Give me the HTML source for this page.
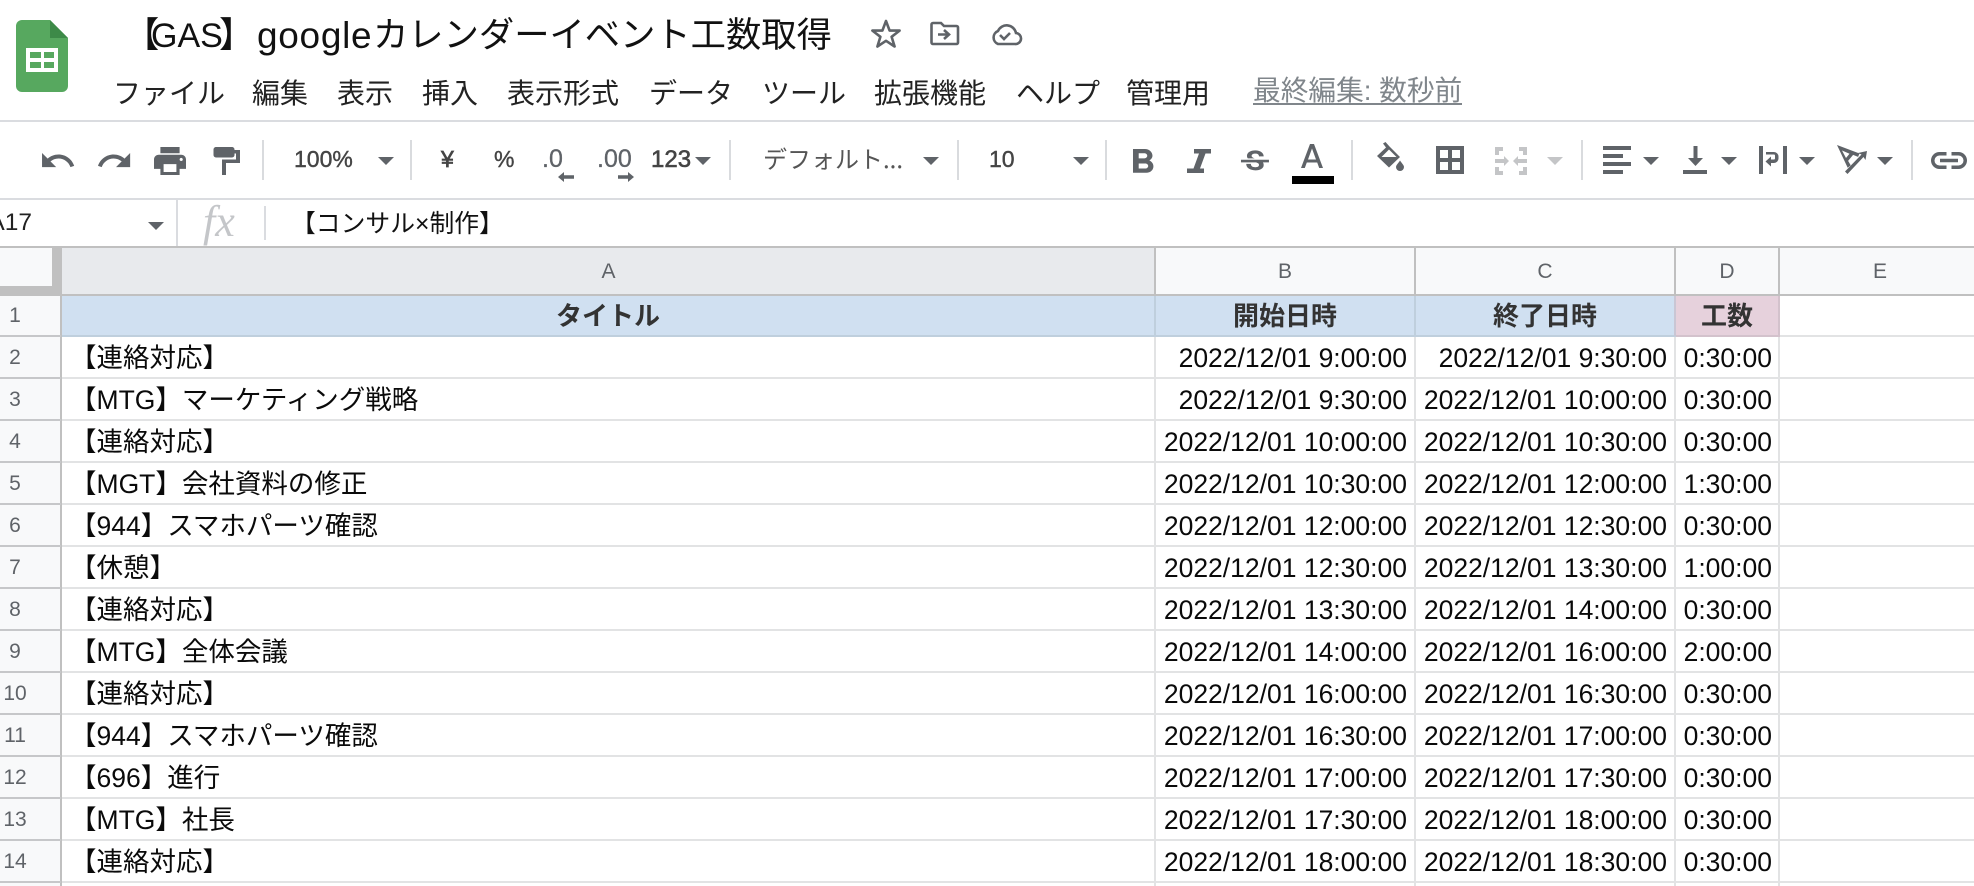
<!DOCTYPE html>
<html lang="ja"><head><meta charset="utf-8"><title>【GAS】googleカレンダーイベント工数取得</title>
<style>
html,body{margin:0;padding:0;background:#fff}
#p{position:relative;width:1974px;height:886px;overflow:hidden;background:#fff;font-family:"Liberation Sans","Noto Sans CJK JP",sans-serif;color:#000}
#p div,#p span.x{position:absolute;white-space:nowrap}
.m{top:71px;font-size:28px;line-height:42px;height:42px;color:#222;font-family:"Noto Sans CJK JP",sans-serif}
.tt{top:11px;font-size:35.3px;line-height:50px;color:#111;font-family:"Liberation Sans","Noto Sans CJK JP",sans-serif}
.tb{top:139px;font-size:23px;line-height:40px;height:40px;color:#444;-webkit-text-stroke:.4px #444}
.sep{top:140px;width:2px;height:40px;background:#d9dbde}
.h{top:248px;height:46px;line-height:47px;font-size:21px;color:#5f6368;text-align:center;background:#f8f9fa}
.hl{top:248px;width:2px;height:47px;background:#c0c0c0}
.t1{top:296px;height:39px;line-height:41px;font-size:26px;font-weight:bold;color:#333;text-align:center;background:#d0e0f1;font-family:"Liberation Sans","Noto Sans CJK JP",sans-serif}
.n{left:0;width:30px;text-align:center;font-size:21px;color:#5f6368;height:42px;line-height:42px}
.a,.b,.c,.d{height:42px;line-height:42.6px;font-size:26.5px;color:#0a0a0a}
.a{left:70px}
.b{right:567px}
.c{right:307px}
.d{right:202px}
.hr{left:62px;width:1912px;height:2px;background:#e2e3e4}
.hn{left:0;width:61px;height:2px;background:#c6c7c9}
.v{top:337px;width:2px;height:549px;background:#e2e3e4}
</style></head><body><div id="p">

<!-- Logo -->
<svg style="position:absolute;left:0;top:0" width="90" height="100" viewBox="0 0 90 100">
<path d="M22 20H50L68 38V86a6 6 0 0 1-6 6H22a6 6 0 0 1-6-6V26a6 6 0 0 1 6-6z" fill="#57a85f"/>
<path d="M50 20L68 38H50z" fill="#3d8a48"/>
<path d="M26 48H58V72H26zM30 52V58H41V52zM44 52V58H54V52zM30 62V68H41V62zM44 62V68H54V62z" fill="#fff" fill-rule="evenodd"/>
</svg>

<!-- Title -->
<div class="tt" style="left:124px">【</div>
<div class="tt" style="left:151px;font-size:34px">GAS</div>
<div class="tt" style="left:219px">】</div>
<div class="tt" style="left:257px;font-size:37px;letter-spacing:.7px">google</div>
<div class="tt" style="left:373px">カレンダーイベント工数取得</div>

<!-- Title icons -->
<svg style="position:absolute;left:860px;top:10px" width="180" height="50" viewBox="860 10 180 50" fill="none" stroke="#5f6368" stroke-width="2.6">
<path d="M886 21L889.6 30.6H899.6L891.6 36.8L894.6 46.5L886 40.8L877.4 46.5L880.4 36.8L872.4 30.6H882.4Z" stroke-linejoin="round"/>
<path d="M931.5 24.5a1.5 1.5 0 0 1 1.5-1.5h8l3 3h12.5a1.5 1.5 0 0 1 1.5 1.5v15a1.5 1.5 0 0 1-1.5 1.5h-23.5a1.5 1.5 0 0 1-1.5-1.5z"/>
<path d="M938 34.5h10M944 30l5 4.5-5 4.5"/>
<path d="M998 44h17a5.5 5.5 0 0 0 1-11 9.5 9.5 0 0 0-18-2 7 7 0 0 0 0 13z"/>
<path d="M1000 35l4 4 6-6"/>
</svg>

<!-- Menu -->
<div class="m" style="left:113px">ファイル</div>
<div class="m" style="left:252px">編集</div>
<div class="m" style="left:337px">表示</div>
<div class="m" style="left:422px">挿入</div>
<div class="m" style="left:507px">表示形式</div>
<div class="m" style="left:649px">データ</div>
<div class="m" style="left:762px">ツール</div>
<div class="m" style="left:874px">拡張機能</div>
<div class="m" style="left:1016px">ヘルプ</div>
<div class="m" style="left:1126px">管理用</div>
<div style="left:1253px;top:71px;font-size:27.7px;line-height:40px;color:#80868b;font-family:'Liberation Sans','Noto Sans CJK JP',sans-serif;border-bottom:2px solid #80868b;height:32px;overflow:visible">最終編集: 数秒前</div>

<!-- Toolbar frame -->
<div style="left:0;top:120px;width:1974px;height:2px;background:#dadce0"></div>
<div style="left:0;top:198px;width:1974px;height:2px;background:#dadce0"></div>

<div class="sep" style="left:262px"></div>
<div class="sep" style="left:410px"></div>
<div class="sep" style="left:729px"></div>
<div class="sep" style="left:957px"></div>
<div class="sep" style="left:1105px"></div>
<div class="sep" style="left:1351px"></div>
<div class="sep" style="left:1581px"></div>
<div class="sep" style="left:1911px"></div>

<div class="tb" style="left:294px">100%</div>
<div class="tb" style="left:441px;-webkit-text-stroke:.7px #444">¥</div>
<div class="tb" style="left:494px">%</div>
<div class="tb" style="left:542px;font-size:25px;color:#5f6368;-webkit-text-stroke:.3px #5f6368">.0</div>
<div class="tb" style="left:597px;font-size:25px;color:#5f6368;-webkit-text-stroke:.3px #5f6368">.00</div>
<div class="tb" style="left:651px;font-size:24px;-webkit-text-stroke:.6px #444;top:140px">123</div>
<div class="tb" style="left:763px;font-size:24px;color:#555;-webkit-text-stroke:0;font-family:'Noto Sans CJK JP',sans-serif;top:138px">デフォルト...</div>
<div class="tb" style="left:989px">10</div>

<svg style="position:absolute;left:0;top:130px" width="1974" height="60" viewBox="0 130 1974 60" fill="#5f6368">
<!-- undo / redo -->
<path transform="translate(38.9 142) scale(1.57)" d="M12.5 8c-2.65 0-5.05.99-6.9 2.6L2 7v9h9l-3.62-3.62c1.39-1.16 3.16-1.88 5.12-1.88 3.54 0 6.55 2.31 7.6 5.5l2.37-.78C21.08 11.03 17.15 8 12.5 8z"/>
<path transform="translate(95.6 142) scale(1.57)" d="M18.4 10.6C16.55 8.99 14.15 8 11.5 8c-4.65 0-8.58 3.03-9.96 7.22L3.9 16c1.05-3.19 4.05-5.5 7.6-5.5 1.95 0 3.73.72 5.12 1.88L13 16h9V7l-3.6 3.6z"/>
<!-- print -->
<path transform="translate(150.8 142.3) scale(1.6 1.56)" d="M19 8H5c-1.66 0-3 1.34-3 3v6h4v4h12v-4h4v-6c0-1.66-1.34-3-3-3zm-3 11H8v-5h8v5zm3-7c-.55 0-1-.45-1-1s.45-1 1-1 1 .45 1 1-.45 1-1 1zm-1-9H6v4h12V3z"/>
<!-- paint -->
<path d="M216 147H232a2.500 2.500 0 0 1 2.500 2.500V150H240V163H226V175H222V159.500H236V153.500H234.500V155a2.500 2.500 0 0 1-2.500 2.500H216a2.500 2.500 0 0 1-2.500-2.500V149.500A2.500 2.500 0 0 1 216 147Z"/>
<!-- dec arrows -->
<path d="M558 177l6-5v3.200h10v3.600h-10v3.200zM634 177l-6-5v3.200h-10v3.600h10v3.200z"/>
<!-- triangles -->
<path d="M378 157h16l-8 8zM695 157h16l-8 8zM923 157h16l-8 8zM1073 157h16l-8 8zM1643 157h16l-8 8zM1721 157h16l-8 8zM1799 157h16l-8 8zM1877 157h16l-8 8z"/>
<path d="M1547 157h16l-8 8z" fill="#c4c5c7"/>
<!-- B I S -->
<path transform="translate(1119.700 142.200) scale(1.9 1.7)" d="M15.6 10.790c.97-.67 1.65-1.77 1.65-2.79 0-2.26-1.75-4-4-4H7v14h7.040c2.090 0 3.710-1.7 3.710-3.790 0-1.520-.86-2.820-2.150-3.420zM10 6.500h3c.83 0 1.500.67 1.500 1.500s-.67 1.500-1.500 1.500h-3v-3zm3.500 9H10v-3h3.500c.83 0 1.500.67 1.500 1.500s-.67 1.500-1.500 1.500z"/>
<path d="M1194 149H1211V153.500H1205.500L1200 168.500H1204V173H1187V168.500H1193.500L1199 153.500H1194Z"/>
<path transform="translate(1236.300 146.400) scale(1.555 1.33)" d="M7.240 8.750c-.26-.48-.39-1.030-.39-1.670 0-.61.13-1.160.4-1.670.26-.5.63-.93 1.110-1.290.48-.35 1.050-.63 1.700-.83.66-.19 1.390-.29 2.180-.29.81 0 1.540.11 2.210.34.66.22 1.230.54 1.690.94.47.4.83.88 1.080 1.430.25.55.38 1.150.38 1.810h-3.010c0-.31-.05-.59-.15-.85-.09-.27-.24-.49-.44-.68-.2-.19-.45-.33-.75-.44-.3-.1-.66-.16-1.060-.16-.39 0-.74.04-1.030.13-.29.09-.53.21-.72.36-.19.16-.34.34-.44.55-.1.21-.15.43-.15.66 0 .48.25.88.74 1.210.38.25.77.48 1.410.7H7.390c-.05-.08-.11-.17-.15-.25zM21 12v-2H3v2h9.620c.18.07.4.14.55.2.37.17.66.34.87.51.21.17.35.36.43.57.07.2.11.43.11.69 0 .23-.05.45-.14.66-.09.2-.23.38-.42.53-.19.15-.42.26-.71.35-.29.08-.63.13-1.010.13-.43 0-.83-.04-1.180-.13s-.66-.23-.91-.42c-.25-.19-.45-.44-.59-.75-.14-.31-.25-.76-.25-1.210H6.400c0 .55.08 1.130.24 1.580.16.45.37.85.65 1.210.28.35.6.66.98.92.37.26.78.48 1.220.65.44.17.9.3 1.380.39.48.08.96.13 1.440.13.8 0 1.530-.09 2.180-.28s1.210-.45 1.670-.79c.46-.34.82-.77 1.070-1.270s.38-1.070.38-1.710c0-.6-.1-1.140-.31-1.610-.05-.11-.11-.23-.17-.33H21z"/>
<!-- Text colour A -->
<path d="M1310 144h4l9 24h-3.800l-2-5.500h-10.400l-2 5.500H1301zM1308 159.500h8L1312 148.500z" fill-rule="evenodd"/>
<path d="M1292 176h42v8h-42z" fill="#000"/>
<!-- fill -->
<path d="M1383 143.500l2.500-1.500 4 4.500 10.500 10.500-11 10.500-12-11.500 9-8.500zM1389 149.500l-7.500 7.500h15z" fill-rule="evenodd"/>
<path d="M1400 160.500c1.500 2.500 4 4.500 4 6.500a4 4 0 0 1-8 0c0-2 2.500-4 4-6.500z"/>
<!-- borders -->
<path d="M1436 146h28v28h-28zM1440 150v8h8v-8zM1452 150v8h8v-8zM1440 162v8h8v-8zM1452 162v8h8v-8z" fill-rule="evenodd"/>
<!-- merge -->
<g fill="#c4c5c7">
<path d="M1495 147h8v4h-8zM1519 147h8v4h-8zM1523 147h4v8h-4zM1495 171h8v4h-8zM1519 171h8v4h-8zM1523 167h4v8h-4zM1495 147h4v8h-4zM1495 167h4v8h-4z"/>
<path d="M1495 159h9v-3l5 5-5 5v-3h-9zM1527 159h-9v-3l-5 5 5 5v-3h9z"/>
</g>
<!-- align -->
<path d="M1603 146h28v4h-28zM1603 154h20v4h-20zM1603 162h28v4h-28zM1603 170h20v4h-20z"/>
<!-- valign -->
<path d="M1693.500 146h4v12h5.500l-7.500 8-7.500-8h5.500zM1683 170h24v4h-24z"/>
<!-- wrap -->
<path d="M1759 146h4v28h-4zM1783 146h4v28h-4zM1766 152h8a4.500 4.500 0 0 1 4.500 4.500v2a4.500 4.500 0 0 1-4.500 4.500h-3v3.500l-5.500-5 5.500-5v3h3a1 1 0 0 0 1-1v-3a1 1 0 0 0-1-1h-8z"/>
<!-- rotate -->
<path d="M1837 145l22.500 8.500-1.400 3.400-5-2-5 6 2.600 4.400-3 2.400zM1842 150.500l4 7.500 3.500-4.300z" fill-rule="evenodd"/>
<path d="M1845 171.500l16.500-17-3.500-1.500 9-2-1.500 9-2-3-16 17z"/>
<!-- link -->
<path d="M1931 160.500a8.500 8.500 0 0 1 8.500-8.500h7v3.500h-7a5 5 0 0 0 0 10h7v3.500h-7a8.500 8.500 0 0 1-8.500-8.500zM1940 158.700h18v3.600h-18zM1951.500 152h7a8.500 8.500 0 0 1 0 17h-7v-3.500h7a5 5 0 0 0 0-10h-7z"/>
</svg>

<!-- Formula bar -->
<svg style="position:absolute;left:140px;top:215px" width="30" height="20" viewBox="140 215 30 20" fill="#5f6368"><path d="M148 222h16l-8 8z"/></svg>
<div style="right:1942px;top:202px;font-size:24.5px;line-height:42px;color:#222">A17</div>
<div style="left:176px;top:200px;width:2px;height:46px;background:#dadce0"></div>
<div style="left:264px;top:206px;width:2px;height:34px;background:#dadce0"></div>
<div style="left:203px;top:199px;font-family:'Liberation Serif',serif;font-style:italic;font-size:44px;line-height:46px;color:#c4c6c9">fx</div>
<div style="left:291px;top:204px;font-size:24.8px;line-height:42px;color:#111">【コンサル×制作】</div>

<!-- Column header -->
<div style="left:0;top:246px;width:1974px;height:2px;background:#c0c0c0"></div>
<div style="left:0;top:248px;width:52px;height:38px;background:#f8f9fa"></div>
<div style="left:52px;top:248px;width:10px;height:47px;background:#c0c0c0"></div>
<div style="left:0;top:286px;width:62px;height:9px;background:#c0c0c0"></div>
<div class="h" style="left:62px;width:1093px;background:#e8eaed">A</div>
<div class="h" style="left:1156px;width:258px">B</div>
<div class="h" style="left:1416px;width:258px">C</div>
<div class="h" style="left:1676px;width:102px">D</div>
<div class="h" style="left:1780px;width:194px;text-align:left;text-indent:93px">E</div>
<div style="left:0;top:294px;width:1974px;height:2px;background:#c0c0c0"></div>
<div class="hl" style="left:1154px"></div>
<div class="hl" style="left:1414px"></div>
<div class="hl" style="left:1674px"></div>
<div class="hl" style="left:1778px"></div>

<!-- Row header -->
<div style="left:0;top:296px;width:60px;height:590px;background:#f8f9fa"></div>
<div style="left:60px;top:296px;width:2px;height:590px;background:#c0c0c0"></div>

<!-- Row 1 -->
<div class="t1" style="left:62px;width:1092px">タイトル</div>
<div class="t1" style="left:1156px;width:258px">開始日時</div>
<div class="t1" style="left:1416px;width:258px">終了日時</div>
<div class="t1" style="left:1676px;width:102px;background:#e6d1dc">工数</div>
<div style="left:62px;top:335px;width:1614px;height:2px;background:#bfcfdd"></div>
<div style="left:1676px;top:335px;width:104px;height:2px;background:#d3c2cc"></div>
<div style="left:1780px;top:335px;width:194px;height:2px;background:#e2e3e4"></div>
<div style="left:1154px;top:296px;width:2px;height:40px;background:#bfcfdd"></div>
<div style="left:1414px;top:296px;width:2px;height:40px;background:#bfcfdd"></div>
<div style="left:1674px;top:296px;width:2px;height:40px;background:#c9c6d4"></div>
<div style="left:1778px;top:296px;width:2px;height:40px;background:#d3c2cc"></div>
<div class="hn" style="top:335px"></div>
<div class="n" style="top:295px">1</div>

<!-- Grid lines -->
<div class="v" style="left:1154px"></div>
<div class="v" style="left:1414px"></div>
<div class="v" style="left:1674px"></div>
<div class="v" style="left:1778px"></div>
<div class="hr" style="top:377px"></div><div class="hn" style="top:377px"></div>
<div class="hr" style="top:419px"></div><div class="hn" style="top:419px"></div>
<div class="hr" style="top:461px"></div><div class="hn" style="top:461px"></div>
<div class="hr" style="top:503px"></div><div class="hn" style="top:503px"></div>
<div class="hr" style="top:545px"></div><div class="hn" style="top:545px"></div>
<div class="hr" style="top:587px"></div><div class="hn" style="top:587px"></div>
<div class="hr" style="top:629px"></div><div class="hn" style="top:629px"></div>
<div class="hr" style="top:671px"></div><div class="hn" style="top:671px"></div>
<div class="hr" style="top:713px"></div><div class="hn" style="top:713px"></div>
<div class="hr" style="top:755px"></div><div class="hn" style="top:755px"></div>
<div class="hr" style="top:797px"></div><div class="hn" style="top:797px"></div>
<div class="hr" style="top:839px"></div><div class="hn" style="top:839px"></div>
<div class="hr" style="top:881px"></div><div class="hn" style="top:881px"></div>

<!-- Rows -->
<div class="n" style="top:337px">2</div><div class="a" style="top:337px">【連絡対応】</div><div class="b" style="top:337px">2022/12/01 9:00:00</div><div class="c" style="top:337px">2022/12/01 9:30:00</div><div class="d" style="top:337px">0:30:00</div>
<div class="n" style="top:379px">3</div><div class="a" style="top:379px">【MTG】マーケティング戦略</div><div class="b" style="top:379px">2022/12/01 9:30:00</div><div class="c" style="top:379px">2022/12/01 10:00:00</div><div class="d" style="top:379px">0:30:00</div>
<div class="n" style="top:421px">4</div><div class="a" style="top:421px">【連絡対応】</div><div class="b" style="top:421px">2022/12/01 10:00:00</div><div class="c" style="top:421px">2022/12/01 10:30:00</div><div class="d" style="top:421px">0:30:00</div>
<div class="n" style="top:463px">5</div><div class="a" style="top:463px">【MGT】会社資料の修正</div><div class="b" style="top:463px">2022/12/01 10:30:00</div><div class="c" style="top:463px">2022/12/01 12:00:00</div><div class="d" style="top:463px">1:30:00</div>
<div class="n" style="top:505px">6</div><div class="a" style="top:505px">【944】スマホパーツ確認</div><div class="b" style="top:505px">2022/12/01 12:00:00</div><div class="c" style="top:505px">2022/12/01 12:30:00</div><div class="d" style="top:505px">0:30:00</div>
<div class="n" style="top:547px">7</div><div class="a" style="top:547px">【休憩】</div><div class="b" style="top:547px">2022/12/01 12:30:00</div><div class="c" style="top:547px">2022/12/01 13:30:00</div><div class="d" style="top:547px">1:00:00</div>
<div class="n" style="top:589px">8</div><div class="a" style="top:589px">【連絡対応】</div><div class="b" style="top:589px">2022/12/01 13:30:00</div><div class="c" style="top:589px">2022/12/01 14:00:00</div><div class="d" style="top:589px">0:30:00</div>
<div class="n" style="top:631px">9</div><div class="a" style="top:631px">【MTG】全体会議</div><div class="b" style="top:631px">2022/12/01 14:00:00</div><div class="c" style="top:631px">2022/12/01 16:00:00</div><div class="d" style="top:631px">2:00:00</div>
<div class="n" style="top:673px">10</div><div class="a" style="top:673px">【連絡対応】</div><div class="b" style="top:673px">2022/12/01 16:00:00</div><div class="c" style="top:673px">2022/12/01 16:30:00</div><div class="d" style="top:673px">0:30:00</div>
<div class="n" style="top:715px">11</div><div class="a" style="top:715px">【944】スマホパーツ確認</div><div class="b" style="top:715px">2022/12/01 16:30:00</div><div class="c" style="top:715px">2022/12/01 17:00:00</div><div class="d" style="top:715px">0:30:00</div>
<div class="n" style="top:757px">12</div><div class="a" style="top:757px">【696】進行</div><div class="b" style="top:757px">2022/12/01 17:00:00</div><div class="c" style="top:757px">2022/12/01 17:30:00</div><div class="d" style="top:757px">0:30:00</div>
<div class="n" style="top:799px">13</div><div class="a" style="top:799px">【MTG】社長</div><div class="b" style="top:799px">2022/12/01 17:30:00</div><div class="c" style="top:799px">2022/12/01 18:00:00</div><div class="d" style="top:799px">0:30:00</div>
<div class="n" style="top:841px">14</div><div class="a" style="top:841px">【連絡対応】</div><div class="b" style="top:841px">2022/12/01 18:00:00</div><div class="c" style="top:841px">2022/12/01 18:30:00</div><div class="d" style="top:841px">0:30:00</div>

</div></body></html>
